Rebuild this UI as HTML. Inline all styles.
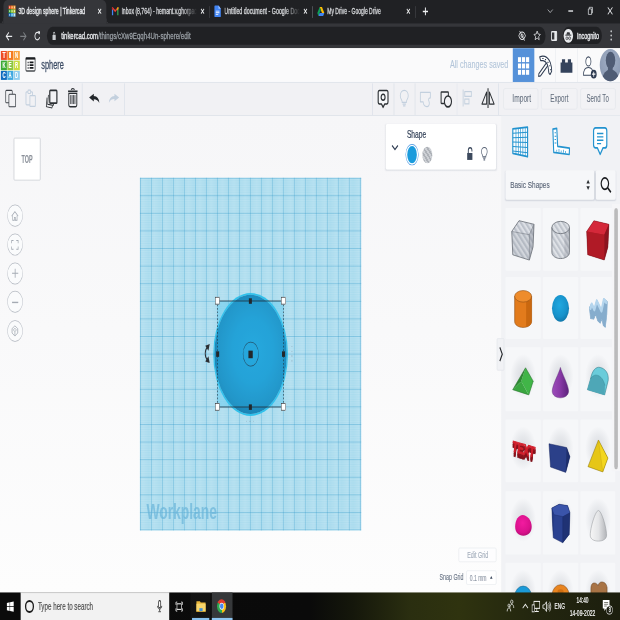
<!DOCTYPE html>
<html lang="en"><head><meta charset="utf-8"><title>3D design sphere | Tinkercad</title>
<style>
html,body{margin:0;padding:0;background:#fff;overflow:hidden}
body{width:620px;height:620px;position:relative}
#d{position:absolute;left:0;top:0;width:1440px;height:900px;transform-origin:0 0;transform:scale(0.430556,0.688889);overflow:hidden;font-family:"Liberation Sans",sans-serif;background:#fbfbfc}
#d div,#d svg,#d span.t{position:absolute;box-sizing:border-box}
#d span.t{white-space:nowrap;transform-origin:0 50%;display:block;-webkit-text-stroke:.2px currentColor}
#d svg{overflow:visible}
</style></head><body><div id="d">
<div style="left:0.0px;top:166.94px;width:1440.0px;height:693.87px;background:linear-gradient(180deg,#f6f6f8 0%,#f9f9fa 45%,#fdfdfd 100%)"></div>
<div style="left:0.0px;top:0.0px;width:1440.0px;height:43.55px;background:#202124"></div>
<div style="left:8.36px;top:0.0px;width:238.53px;height:37.74px;background:#35363a;border-radius:9px 9px 0 0"></div>
<div style="left:0.35999999999999943px;top:25.97px;width:8px;height:8px;background:radial-gradient(circle at 0 0,transparent 7.500px,#35363a 8px)"></div>
<div style="left:246.89px;top:25.97px;width:8px;height:8px;background:radial-gradient(circle at 100% 0,transparent 7.500px,#35363a 8px)"></div>
<div style="left:0.0px;top:33.97px;width:1440.0px;height:35.71px;background:#35363a"></div>
<div style="left:109.16px;top:38.61px;width:1157.81px;height:26.42px;background:#202124;border-radius:14px"></div>
<div style="left:485.65px;top:8.71px;width:1.4px;height:17.42px;background:#55585d"></div>
<div style="left:725.34px;top:8.71px;width:1.4px;height:17.42px;background:#55585d"></div>
<div style="left:964.8px;top:8.71px;width:1.39px;height:17.42px;background:#55585d"></div>
<span class=t style="left:43.2px;top:9.64px;font-size:12px;line-height:14.4px;color:#e8eaed;font-weight:400;transform:scaleX(0.9924);-webkit-text-stroke:0.5px currentColor;">3D design sphere | Tinkercad</span>
<svg style="left:227.38px;top:12.48px;" width="8.83" height="8.71" viewBox="0 0 10 10" preserveAspectRatio="none"><path d="M1 1L9 9M9 1L1 9" stroke="#f1f3f4" stroke-width="2.100" fill="none"/></svg>
<span class=t style="left:282.43px;top:9.64px;font-size:12px;line-height:14.4px;color:#cfd1d4;font-weight:400;transform:scaleX(0.9919);-webkit-mask-image:linear-gradient(90deg,#000 80%,transparent 100%);mask-image:linear-gradient(90deg,#000 80%,transparent 100%);-webkit-text-stroke:0.5px currentColor;">Inbox (8,764) - hemant.v.ghorpac</span>
<svg style="left:466.37px;top:12.48px;" width="8.83" height="8.71" viewBox="0 0 10 10" preserveAspectRatio="none"><path d="M1 1L9 9M9 1L1 9" stroke="#f1f3f4" stroke-width="2.100" fill="none"/></svg>
<span class=t style="left:521.42px;top:9.64px;font-size:12px;line-height:14.4px;color:#cfd1d4;font-weight:400;transform:scaleX(1.0269);-webkit-mask-image:linear-gradient(90deg,#000 80%,transparent 100%);mask-image:linear-gradient(90deg,#000 80%,transparent 100%);-webkit-text-stroke:0.5px currentColor;">Untitled document - Google Doc</span>
<svg style="left:705.37px;top:12.48px;" width="8.82" height="8.71" viewBox="0 0 10 10" preserveAspectRatio="none"><path d="M1 1L9 9M9 1L1 9" stroke="#f1f3f4" stroke-width="2.100" fill="none"/></svg>
<span class=t style="left:760.41px;top:9.64px;font-size:12px;line-height:14.4px;color:#cfd1d4;font-weight:400;transform:scaleX(0.9724);-webkit-text-stroke:0.5px currentColor;">My Drive - Google Drive</span>
<svg style="left:944.36px;top:12.48px;" width="8.83" height="8.71" viewBox="0 0 10 10" preserveAspectRatio="none"><path d="M1 1L9 9M9 1L1 9" stroke="#f1f3f4" stroke-width="2.100" fill="none"/></svg>
<svg style="left:19.51px;top:8.42px;" width="16.03" height="16.26" viewBox="0 0 16 16" preserveAspectRatio="none"><rect x="0.0" y="0.0" width="5.200" height="5.200" fill="#ee4c23"/><rect x="1.7" y="1.3" width="1.800" height="2.600" fill="#fff" opacity=".8"/><rect x="5.4" y="0.0" width="5.200" height="5.200" fill="#f47b20"/><rect x="7.1000000000000005" y="1.3" width="1.800" height="2.600" fill="#fff" opacity=".8"/><rect x="10.8" y="0.0" width="5.200" height="5.200" fill="#f9a13a"/><rect x="12.5" y="1.3" width="1.800" height="2.600" fill="#fff" opacity=".8"/><rect x="0.0" y="5.4" width="5.200" height="5.200" fill="#3aaa35"/><rect x="1.7" y="6.7" width="1.800" height="2.600" fill="#fff" opacity=".8"/><rect x="5.4" y="5.4" width="5.200" height="5.200" fill="#8cc63f"/><rect x="7.1000000000000005" y="6.7" width="1.800" height="2.600" fill="#fff" opacity=".8"/><rect x="10.8" y="5.4" width="5.200" height="5.200" fill="#c9dc3f"/><rect x="12.5" y="6.7" width="1.800" height="2.600" fill="#fff" opacity=".8"/><rect x="0.0" y="10.8" width="5.200" height="5.200" fill="#0f6cbf"/><rect x="1.7" y="12.100000000000001" width="1.800" height="2.600" fill="#fff" opacity=".8"/><rect x="5.4" y="10.8" width="5.200" height="5.200" fill="#3fa9e0"/><rect x="7.1000000000000005" y="12.100000000000001" width="1.800" height="2.600" fill="#fff" opacity=".8"/><rect x="10.8" y="10.8" width="5.200" height="5.200" fill="#8fcdee"/><rect x="12.5" y="12.100000000000001" width="1.800" height="2.600" fill="#fff" opacity=".8"/></svg>
<svg style="left:259.9px;top:10.45px;" width="15.09" height="12.2" viewBox="0 0 16 12" preserveAspectRatio="none"><path d="M0 12V1.5L3 1.2V12z" fill="#4285f4"/><path d="M13 12V1.2l3 .3V12z" fill="#34a853"/><path d="M0 1.5 8 7.5 16 1.5V0.8L14.5 0 8 4.6 1.5 0 0 .8z" fill="#ea4335"/><path d="M13 1.2 16 .2V3l-3 2z" fill="#fbbc04"/><path d="M0 .2 3 1.2V5L0 3z" fill="#c5221f"/></svg>
<svg style="left:498.43px;top:8.13px;" width="14.86" height="16.84" viewBox="0 0 14 18" preserveAspectRatio="none"><path d="M1.5 0H9l5 5v11.5A1.5 1.5 0 0 1 12.5 18h-11A1.5 1.5 0 0 1 0 16.500V1.5A1.5 1.5 0 0 1 1.5 0z" fill="#4285f4"/><path d="M3 8h8v1.3H3zM3 10.600h8v1.300H3zM3 13.200h5.500v1.300H3z" fill="#fff"/><path d="M9 0l5 5H9z" fill="#a1c2fa"/></svg>
<svg style="left:737.19px;top:9.58px;" width="16.26" height="13.65" viewBox="0 0 18 16" preserveAspectRatio="none"><path d="M6 0h6l6 10.400h-6z" fill="#fbbc04"/><path d="M0 10.400 6 0l3 5.200L3 15.600z" fill="#0f9d58"/><path d="M3 15.600l3-5.200h12l-3 5.200z" fill="#4285f4"/></svg>
<svg style="left:981.52px;top:11.03px;" width="12.08" height="11.32" viewBox="0 0 12 12" preserveAspectRatio="none"><path d="M6 0V12M0 6H12" stroke="#f1f3f4" stroke-width="2.200"/></svg>
<svg style="left:1271.15px;top:13.06px;" width="13.93" height="6.1" viewBox="0 0 12 7" preserveAspectRatio="none"><path d="M1 1l5 5 5-5" stroke="#c9ccd0" stroke-width="1.3" fill="none"/></svg>
<div style="left:1319.92px;top:15.39px;width:11.38px;height:1.45px;background:#e8eaed"></div>
<svg style="left:1365.68px;top:9.87px;" width="10.68" height="11.61" viewBox="0 0 11 11" preserveAspectRatio="none"><path d="M.6 2.800h7.600v7.600H.6zM2.800 2.800V.6h7.600v7.600H8.200" stroke="#e8eaed" stroke-width="1.2" fill="none"/></svg>
<svg style="left:1410.74px;top:10.16px;" width="12.07" height="11.32" viewBox="0 0 10 10" preserveAspectRatio="none"><path d="M.5.5l9 9M9.500.5l-9 9" stroke="#e8eaed" stroke-width="1.3" fill="none"/></svg>
<svg style="left:13.01px;top:45.58px;" width="16.25" height="13.36" viewBox="0 0 16 14" preserveAspectRatio="none"><path d="M15 7H2M7.500 1 1.500 7l6 6" stroke="#e8eaed" stroke-width="2" fill="none"/></svg>
<svg style="left:45.52px;top:45.58px;" width="15.8" height="13.36" viewBox="0 0 16 14" preserveAspectRatio="none"><path d="M1 7H14M8.500 1l6 6-6 6" stroke="#7d8084" stroke-width="2" fill="none"/></svg>
<svg style="left:78.5px;top:44.71px;" width="15.33" height="14.81" viewBox="0 0 16 16" preserveAspectRatio="none"><path d="M13.600 9.500A5.800 5.800 0 1 1 12 3.800" stroke="#e8eaed" stroke-width="2" fill="none"/><path d="M9 .5h5.500V6z" fill="#e8eaed"/></svg>
<svg style="left:122.17px;top:45.87px;" width="7.43" height="12.19" viewBox="0 0 10 13" preserveAspectRatio="none"><rect x="0" y="5" width="10" height="8" rx="1" fill="#c9ccd0"/><path d="M2.500 5V3.500a2.500 2.500 0 0 1 5 0V5" stroke="#c9ccd0" stroke-width="1.600" fill="none"/></svg>
<span class=t style="left:142.14px;top:43.42px;font-size:14px;line-height:16.8px;color:#e8eaed;font-weight:400;transform:scaleX(0.9807);-webkit-text-stroke:0.5px currentColor;">tinkercad.com</span>
<span class=t style="left:227.61px;top:43.42px;font-size:14px;line-height:16.8px;color:#9aa0a6;font-weight:400;transform:scaleX(1.0148);-webkit-text-stroke:0.4px currentColor;">/things/cXw9Eqqh4Un-sphere/edit</span>
<svg style="left:1204.49px;top:45.0px;" width="17.19" height="13.94" viewBox="0 0 18 14" preserveAspectRatio="none"><path d="M1 7C3 3 6 1.500 9 1.500S15 3 17 7c-2 4-5 5.500-8 5.500S3 11 1 7z" stroke="#e8eaed" stroke-width="1.500" fill="none"/><circle cx="9" cy="7" r="2.600" stroke="#e8eaed" stroke-width="1.400" fill="none"/><path d="M3 0 15 14" stroke="#e8eaed" stroke-width="1.600"/></svg>
<svg style="left:1239.33px;top:44.42px;" width="17.19" height="14.52" viewBox="0 0 20 19" preserveAspectRatio="none"><path d="M10 1.500l2.600 5.600 6 .7-4.500 4.100 1.300 6L10 14.800 4.600 17.900l1.300-6L1.400 7.800l6-.7z" stroke="#e8eaed" stroke-width="1.700" fill="none" stroke-linejoin="round"/></svg>
<svg style="left:1280.21px;top:44.71px;" width="13.93" height="14.52" viewBox="0 0 14 14" preserveAspectRatio="none"><rect x="1" y="1" width="12" height="12" rx="1" stroke="#e8eaed" stroke-width="2" fill="none"/><rect x="7.500" y="1" width="5.500" height="12" fill="#e8eaed"/></svg>
<div style="left:1306.68px;top:39.48px;width:91.51px;height:24.68px;background:#202124;border-radius:13px"></div>
<div style="left:1309.47px;top:41.52px;width:21.37px;height:20.61px;background:#e8eaed;border-radius:50%"></div>
<svg style="left:1312.26px;top:45.58px;" width="15.79" height="13.36" viewBox="0 0 16 14" preserveAspectRatio="none"><path d="M3.500 4.500 5 .8h6l1.500 3.700z" fill="#35363a"/><rect x="1" y="4.500" width="14" height="1.500" fill="#35363a"/><circle cx="4.800" cy="10" r="2.200" stroke="#35363a" stroke-width="1.300" fill="none"/><circle cx="11.200" cy="10" r="2.200" stroke="#35363a" stroke-width="1.300" fill="none"/><path d="M7 10h2" stroke="#35363a" stroke-width="1.200"/></svg>
<span class=t style="left:1339.66px;top:44.62px;font-size:12px;line-height:14.4px;color:#e8eaed;font-weight:400;transform:scaleX(1.0589);-webkit-text-stroke:0.5px currentColor;">Incognito</span>
<div style="left:1417.7px;top:44.27px;width:3.25px;height:2.62px;background:#e8eaed;border-radius:50%"></div>
<div style="left:1417.7px;top:50.37px;width:3.25px;height:2.61px;background:#e8eaed;border-radius:50%"></div>
<div style="left:1417.7px;top:56.47px;width:3.25px;height:2.61px;background:#e8eaed;border-radius:50%"></div>
<div style="left:0.0px;top:69.68px;width:1440.0px;height:50.51px;background:#fafafb;border-bottom:1.200px solid #cdd4e0"></div>
<div style="left:2.44px;top:73.6px;width:13.93px;height:13.89px;background:#ee4c23"></div>
<span class=t style="left:5.81px;top:73.19px;font-size:12.5px;line-height:15.0px;color:#fff;font-weight:700;transform:scaleX(0.9431);text-align:center">T</span>
<div style="left:17.07px;top:73.6px;width:13.94px;height:13.89px;background:#f47b20"></div>
<span class=t style="left:20.44px;top:73.19px;font-size:12.5px;line-height:15.0px;color:#fff;font-weight:700;transform:scaleX(2.0733);text-align:center">I</span>
<div style="left:31.7px;top:73.6px;width:13.94px;height:13.89px;background:#f9a13a"></div>
<span class=t style="left:35.07px;top:73.19px;font-size:12.5px;line-height:15.0px;color:#fff;font-weight:700;transform:scaleX(0.7976);text-align:center">N</span>
<div style="left:2.44px;top:88.07px;width:13.93px;height:13.89px;background:#3aaa35"></div>
<span class=t style="left:5.81px;top:87.66px;font-size:12.5px;line-height:15.0px;color:#fff;font-weight:700;transform:scaleX(0.7976);text-align:center">K</span>
<div style="left:17.07px;top:88.07px;width:13.94px;height:13.89px;background:#8cc63f"></div>
<span class=t style="left:20.44px;top:87.66px;font-size:12.5px;line-height:15.0px;color:#fff;font-weight:700;transform:scaleX(0.8635);text-align:center">E</span>
<div style="left:31.7px;top:88.07px;width:13.94px;height:13.89px;background:#c9dc3f"></div>
<span class=t style="left:35.07px;top:87.66px;font-size:12.5px;line-height:15.0px;color:#fff;font-weight:700;transform:scaleX(0.7976);text-align:center">R</span>
<div style="left:2.44px;top:102.54px;width:13.93px;height:13.89px;background:#0f6cbf"></div>
<span class=t style="left:5.81px;top:102.13px;font-size:12.5px;line-height:15.0px;color:#fff;font-weight:700;transform:scaleX(0.7976);text-align:center">C</span>
<div style="left:17.07px;top:102.54px;width:13.94px;height:13.89px;background:#3fa9e0"></div>
<span class=t style="left:20.44px;top:102.13px;font-size:12.5px;line-height:15.0px;color:#fff;font-weight:700;transform:scaleX(0.7976);text-align:center">A</span>
<div style="left:31.7px;top:102.54px;width:13.94px;height:13.89px;background:#8fcdee"></div>
<span class=t style="left:35.07px;top:102.13px;font-size:12.5px;line-height:15.0px;color:#fff;font-weight:700;transform:scaleX(0.7976);text-align:center">D</span>
<svg style="left:58.53px;top:83.03px;" width="23.69" height="21.2" viewBox="0 0 24 21" preserveAspectRatio="none"><rect x="1.200" y="1.200" width="21.600" height="18.600" rx="1.600" fill="#fff" stroke="#4a4d52" stroke-width="2"/><path d="M1 2h22" stroke="#1d1f22" stroke-width="3"/><path d="M10 7.500h9M10 11.500h9M10 15.500h9" stroke="#17191c" stroke-width="2.600"/><path d="M5 7.500h3M5 11.500h3M5 15.500h3" stroke="#4a4d52" stroke-width="2.200"/></svg>
<span class=t style="left:95.92px;top:84.43px;font-size:18px;line-height:21.6px;color:#3a4a63;font-weight:400;transform:scaleX(0.9453);-webkit-text-stroke:0.4px currentColor;">sphere</span>
<span class=t style="left:1045.16px;top:84.15px;font-size:17px;line-height:20.4px;color:#b3c5d9;font-weight:400;transform:scaleX(0.9830);">All changes saved</span>
<div style="left:1191.02px;top:69.68px;width:49.7px;height:49.35px;background:#5591d9"></div>
<svg style="left:1203.1px;top:82.74px;" width="26.01" height="25.55" viewBox="0 0 25 25" preserveAspectRatio="none"><rect x="0" y="0" width="7" height="7" fill="#fff"/><rect x="9" y="0" width="7" height="7" fill="#fff"/><rect x="18" y="0" width="7" height="7" fill="#fff"/><rect x="0" y="9" width="7" height="7" fill="#fff"/><rect x="9" y="9" width="7" height="7" fill="#fff"/><rect x="18" y="9" width="7" height="7" fill="#fff"/><rect x="0" y="18" width="7" height="7" fill="#fff"/><rect x="9" y="18" width="7" height="7" fill="#fff"/><rect x="18" y="18" width="7" height="7" fill="#fff"/></svg>
<div style="left:1289.61px;top:69.68px;width:1.16px;height:49.35px;background:#e1e5ea"></div>
<div style="left:1341.17px;top:69.68px;width:1.17px;height:49.35px;background:#e1e5ea"></div>
<svg style="left:1249.55px;top:80.71px;" width="33.44" height="30.19" viewBox="0 0 32 30" preserveAspectRatio="none"><path d="M18.500 10 22 13.500 5 29 1 29.600 1.400 26z" fill="#fff" stroke="#2f3c52" stroke-width="1.900" stroke-linejoin="round"/><path d="M3.400 1.600Q9-.3 14.800 .9 23 3 27 10 30.500 17 30 22L26.600 26.800Q23 26 23 21 22.500 15 19.500 11.500 16 7.500 11 7L5.300 6.800z" fill="#fff" stroke="#2f3c52" stroke-width="2" stroke-linejoin="round"/><path d="M9 3.800h3M15 5.500h2.500M20.500 9.500h2.500M24.500 14.500h2.500M26 20h2.500" stroke="#2f3c52" stroke-width="1.500"/></svg>
<svg style="left:1301.57px;top:85.65px;" width="27.41" height="19.45" viewBox="0 0 26 20" preserveAspectRatio="none"><path d="M0 5h3V0h7v5h6V0h7v5h3v15H0z" fill="#34435c"/></svg>
<svg style="left:1352.67px;top:80.71px;" width="32.52" height="32.81" viewBox="0 0 30 32" preserveAspectRatio="none"><ellipse cx="12.500" cy="8" rx="5.500" ry="6.500" fill="#fff" stroke="#3a475c" stroke-width="1.600"/><path d="M2 27.500c0-7 4-11 10.500-11s10.500 4 10.500 11z" fill="#fff" stroke="#3a475c" stroke-width="1.600" stroke-linejoin="round"/><circle cx="24" cy="26" r="6.200" fill="#2f3c52"/><path d="M20.500 26h7M24 22.500v7" stroke="#fff" stroke-width="1.700"/></svg>
<div style="left:1392.62px;top:70.84px;width:49.700000000000045px;height:47.61px;border-radius:50%;background:radial-gradient(circle at 50% 35%,#a2b0c6,#8392ac);overflow:hidden"><div style="left:29%;top:9%;width:44%;height:52%;border-radius:50%;background:#4f5c74"></div><div style="left:40%;top:50%;width:22%;height:20%;background:#4f5c74"></div><div style="left:12%;top:63%;width:78%;height:60%;border-radius:50% 50% 0 0;background:#4f5c74"></div></div>
<div style="left:0.0px;top:120.19px;width:1440.0px;height:47.91px;background:#f1f1f4;border-bottom:1.200px solid #dadfe7"></div>
<div style="left:190.45px;top:121.06px;width:1.4px;height:46.17px;background:#dfe3ea"></div>
<div style="left:288.46px;top:121.06px;width:1.4px;height:46.17px;background:#dfe3ea"></div>
<div style="left:864.23px;top:121.06px;width:1.4px;height:46.17px;background:#dfe3ea"></div>
<div style="left:914.17px;top:121.06px;width:1.39px;height:46.17px;background:#dfe3ea"></div>
<div style="left:963.41px;top:121.06px;width:1.39px;height:46.17px;background:#dfe3ea"></div>
<div style="left:1060.95px;top:121.06px;width:1.4px;height:46.17px;background:#dfe3ea"></div>
<div style="left:1157.34px;top:121.06px;width:1.4px;height:46.17px;background:#dfe3ea"></div>
<svg style="left:11.61px;top:129.77px;" width="26.02" height="25.84" viewBox="0 0 24 26" preserveAspectRatio="none"><rect x="1.200" y="1.200" width="14" height="18" rx="1.500" fill="#f1f1f4" stroke="#3d4248" stroke-width="1.500"/><rect x="8" y="7" width="14.500" height="18" rx="1.500" fill="#f1f1f4" stroke="#3d4248" stroke-width="1.500"/></svg>
<svg style="left:58.99px;top:130.06px;" width="24.16" height="25.55" viewBox="0 0 22 26" preserveAspectRatio="none"><rect x="1.200" y="3.500" width="14" height="19" rx="1.500" fill="none" stroke="#c3d0de" stroke-width="1.800"/><rect x="5.500" y="0.800" width="5.500" height="5" rx="1" fill="#f1f1f4" stroke="#c3d0de" stroke-width="1.600"/><rect x="9.500" y="9" width="11.500" height="16" rx="1" fill="#f1f1f4" stroke="#c3d0de" stroke-width="1.800"/></svg>
<svg style="left:106.37px;top:130.06px;" width="28.8" height="27.29" viewBox="0 0 27 28" preserveAspectRatio="none"><path d="M3 12 1.500 25.500l12 2L15 24" fill="none" stroke="#2b2f33" stroke-width="1.600"/><path d="M6 8 4.500 22l12 1.500L18 20" fill="none" stroke="#2b2f33" stroke-width="1.600"/><rect x="9" y="1.300" width="15.500" height="19" rx="1.500" fill="#f1f1f4" stroke="#2b2f33" stroke-width="2.600"/></svg>
<svg style="left:156.54px;top:127.45px;" width="24.16" height="29.03" viewBox="0 0 22 29" preserveAspectRatio="none"><path d="M7.500 3.500C8 1 14 1 14.500 3.500" stroke="#2b2f33" stroke-width="1.800" fill="none"/><path d="M1 5.500h20" stroke="#2b2f33" stroke-width="2.400"/><path d="M2.500 8.500h17V25a3 3 0 0 1-3 3h-11a3 3 0 0 1-3-3z" fill="#f1f1f4" stroke="#2b2f33" stroke-width="2"/><path d="M6.500 11v13M9.500 11v13M12.500 11v13M15.500 11v13" stroke="#2b2f33" stroke-width="1.300"/></svg>
<svg style="left:206.71px;top:135.58px;" width="23.69" height="13.36" viewBox="0 0 24 20" preserveAspectRatio="none"><path d="M11 0 0 8.500 11 17V12C17 12 21 14.500 24 20 23.500 11 19 5.500 11 5z" fill="#23272b"/></svg>
<svg style="left:252.7px;top:135.87px;" width="23.69" height="13.07" viewBox="0 0 24 20" preserveAspectRatio="none"><path d="M13 0 24 8.500 13 17V12C7 12 3 14.500 0 20 .5 11 5 5.500 13 5z" fill="#c3d0de"/></svg>
<svg style="left:877.01px;top:130.35px;" width="25.54" height="27.3" viewBox="0 0 24 27" preserveAspectRatio="none"><path d="M4 1.300h16a2.700 2.700 0 0 1 2.700 2.700v14a2.700 2.700 0 0 1-2.700 2.700h-4.500L12 25.500 8.500 20.700H4A2.700 2.700 0 0 1 1.300 18V4A2.700 2.700 0 0 1 4 1.300z" fill="#f7f8fa" stroke="#2b2f33" stroke-width="2.400" stroke-linejoin="round"/><ellipse cx="12" cy="11" rx="4.300" ry="4.300" fill="none" stroke="#2b2f33" stroke-width="2.400"/></svg>
<svg style="left:927.64px;top:130.35px;" width="21.83" height="25.55" viewBox="0 0 20 26" preserveAspectRatio="none"><path d="M10 1.200c5 0 8.500 3.500 8.500 8 0 3-1.500 4.800-3 6.500-.8 1-1 2-1 3.300h-9c0-1.300-.2-2.300-1-3.300-1.500-1.700-3-3.500-3-6.500 0-4.500 3.500-8 8.500-8z" fill="none" stroke="#c3d0de" stroke-width="1.800"/><path d="M6.500 21.500h7M7.500 24h5" stroke="#c3d0de" stroke-width="1.800"/></svg>
<svg style="left:975.48px;top:132.97px;" width="26.95" height="22.93" viewBox="0 0 25 23" preserveAspectRatio="none"><path d="M1.200 1.200h21.600v8c-3.500 0-5 2-3 5 1.500 2.500 1 7-3.500 7.600-5 .5-9-2-9-7H1.200z" fill="none" stroke="#c3d0de" stroke-width="1.800" stroke-linejoin="round"/></svg>
<svg style="left:1022.86px;top:131.81px;" width="27.41" height="24.67" viewBox="0 0 26 25" preserveAspectRatio="none"><rect x="1.400" y="1.400" width="16" height="17" rx="1" fill="none" stroke="#2b2f33" stroke-width="2.200"/><ellipse cx="16.500" cy="15.500" rx="7.800" ry="8" fill="#f1f1f4" stroke="#2b2f33" stroke-width="2.400"/></svg>
<svg style="left:1073.96px;top:130.06px;" width="21.83" height="24.68" viewBox="0 0 20 25" preserveAspectRatio="none"><path d="M1.500 0v25" stroke="#c3d0de" stroke-width="1.800"/><rect x="5" y="3" width="14" height="7" fill="none" stroke="#c3d0de" stroke-width="1.800"/><rect x="5" y="14" width="9" height="7" fill="none" stroke="#c3d0de" stroke-width="1.800"/></svg>
<svg style="left:1117.16px;top:128.32px;" width="32.98" height="28.74" viewBox="0 0 30 28" preserveAspectRatio="none"><path d="M15 0v28" stroke="#2b2f33" stroke-width="2.200"/><path d="M12 5.500V22.500H2z" fill="none" stroke="#2b2f33" stroke-width="1.800" stroke-linejoin="round"/><path d="M18 5.500V22.500H28z" fill="none" stroke="#2b2f33" stroke-width="1.800" stroke-linejoin="round"/></svg>
<div style="left:1169.19px;top:127.74px;width:81.29px;height:31.07px;background:#f2f2f5;border:1px solid #e1e4e9;border-radius:4px"></div>
<span class=t style="left:1189.63px;top:133.83px;font-size:15.5px;line-height:18.6px;color:#5f6a7a;font-weight:400;transform:scaleX(0.9939);-webkit-text-stroke:0.05px currentColor;">Import</span>
<div style="left:1256.52px;top:127.74px;width:84.54px;height:31.07px;background:#f2f2f5;border:1px solid #e1e4e9;border-radius:4px"></div>
<span class=t style="left:1277.88px;top:133.83px;font-size:15.5px;line-height:18.6px;color:#5f6a7a;font-weight:400;transform:scaleX(0.9436);-webkit-text-stroke:0.05px currentColor;">Export</span>
<div style="left:1347.56px;top:127.74px;width:82.22px;height:31.07px;background:#f2f2f5;border:1px solid #e1e4e9;border-radius:4px"></div>
<span class=t style="left:1362.43px;top:133.83px;font-size:15.5px;line-height:18.6px;color:#5f6a7a;font-weight:400;transform:scaleX(0.9191);-webkit-text-stroke:0.05px currentColor;">Send To</span>
<div style="left:31.59px;top:199.74px;width:62.71px;height:62.13px;background:#fff;border:1.500px solid #b9bec6;border-radius:2px"></div>
<span class=t style="left:50.17px;top:222.39px;font-size:15px;line-height:18.0px;color:#8a9099;font-weight:700;transform:scaleX(0.8359);">TOP</span>
<div style="left:17.19px;top:297.29px;width:35.76px;height:31.94px;border:1.300px solid #b5bac2;border-radius:50%;background:#fafbfc"></div>
<div style="left:17.19px;top:338.81px;width:35.76px;height:31.93px;border:1.300px solid #b5bac2;border-radius:50%;background:#fafbfc"></div>
<div style="left:17.19px;top:380.9px;width:35.76px;height:31.94px;border:1.300px solid #b5bac2;border-radius:50%;background:#fafbfc"></div>
<div style="left:17.19px;top:422.42px;width:35.76px;height:31.93px;border:1.300px solid #b5bac2;border-radius:50%;background:#fafbfc"></div>
<div style="left:17.19px;top:464.52px;width:35.76px;height:31.93px;border:1.300px solid #b5bac2;border-radius:50%;background:#fafbfc"></div>
<svg style="left:26.48px;top:305.71px;" width="17.18" height="14.81" viewBox="0 0 17 15" preserveAspectRatio="none"><path d="M1 8 8.500 1.200 16 8" fill="none" stroke="#a4aab3" stroke-width="1.500"/><path d="M3.500 7v7h4v-4h2v4h4V7" fill="none" stroke="#a4aab3" stroke-width="1.500"/></svg>
<svg style="left:26.48px;top:347.52px;" width="17.18" height="14.8" viewBox="0 0 16 15" preserveAspectRatio="none"><path d="M1 5V1h4M11 1h4v4M15 10v4h-4M5 14H1v-4" fill="none" stroke="#a4aab3" stroke-width="1.500"/></svg>
<svg style="left:27.87px;top:390.19px;" width="14.4" height="13.36" viewBox="0 0 14 14" preserveAspectRatio="none"><path d="M7 0v14M0 7h14" stroke="#a4aab3" stroke-width="1.800"/></svg>
<svg style="left:27.87px;top:437.52px;" width="14.4" height="2.03" viewBox="0 0 14 2" preserveAspectRatio="none"><path d="M0 1h14" stroke="#a4aab3" stroke-width="2"/></svg>
<svg style="left:26.48px;top:472.06px;" width="17.18" height="16.84" viewBox="0 0 17 17" preserveAspectRatio="none"><path d="M8.500 1 15 5v6.500l-6.500 4.500L2 11.500V5z" fill="none" stroke="#a4aab3" stroke-width="1.400"/><path d="M8.500 4.500 12 7l-3.500 2.500L5 7z" fill="none" stroke="#a4aab3" stroke-width="1.300"/><path d="M8.500 9.500V15" stroke="#a4aab3" stroke-width="1.300"/></svg>
<div style="left:325.16px;top:257.52px;width:513.52px;height:512.13px;background-color:#b9e2f1;background-image:linear-gradient(90deg,rgba(45,150,200,.27) 0,rgba(45,150,200,.27) 2.4px,transparent 2.4px),linear-gradient(180deg,rgba(45,150,200,.33) 0,rgba(45,150,200,.33) 1.6px,transparent 1.6px),linear-gradient(90deg,rgba(80,175,215,.075) 0,rgba(80,175,215,.075) 1px,transparent 1px),linear-gradient(180deg,rgba(80,175,215,.075) 0,rgba(80,175,215,.075) 1px,transparent 1px);background-size:25.536px 25.547px,25.536px 25.547px,2.5536px 2.5547px,2.5536px 2.5547px;background-position:0.20px -0.20px,0.20px -0.20px,1.40px 0.60px,1.40px 0.60px;box-shadow:inset 0 0 0 1.500px rgba(90,170,215,.18),0 0 3px rgba(120,190,225,.45)"></div>
<span class=t style="left:340.03px;top:723.58px;font-size:32.5px;line-height:39.0px;color:rgba(100,178,216,.66);font-weight:700;transform:scaleX(0.9905);-webkit-text-stroke:0px currentColor;">Workplane</span>
<div style="left:505.16px;top:436.94px;width:153.29px;height:153.87px;background:rgba(120,205,235,.35)"></div>
<div style="left:498.19px;top:427.65px;width:168.15px;height:173.03px;border-radius:50%;background:radial-gradient(circle at 53% 47%,#21a2d9 0%,#1f9ad0 38%,#1c8cbf 64%,#197ba8 84%,#17709a 100%);box-shadow:0 0 0 2.800px #30c2ec"></div>
<div style="left:505.16px;top:436.94px;width:153.29px;height:153.87px;background:rgba(60,195,245,.20)"></div>
<svg style="left:505.16px;top:436.94px;" width="153.29" height="153.87" viewBox="0 0 153.29 153.87" preserveAspectRatio="none"><path d="M0 0H153.29M0 153.87H153.29" stroke="#22313d" stroke-width="1.500" fill="none" opacity=".8"/><path d="M0 0V153.87M153.29 0V153.87" stroke="#22313d" stroke-width="1.600" stroke-dasharray="2.500 2.500" fill="none" opacity=".85"/></svg>
<div style="left:563.69px;top:495.87px;width:37.16px;height:36.58px;border-radius:50%;border:1.400px solid #24506a"></div>
<div style="left:499.91px;top:431.44px;width:10.5px;height:11px;background:#fff;border:1.600px solid #2b2f33;"></div>
<div style="left:653.20px;top:431.44px;width:10.5px;height:11px;background:#fff;border:1.600px solid #2b2f33;"></div>
<div style="left:499.91px;top:585.31px;width:10.5px;height:11px;background:#fff;border:1.600px solid #2b2f33;"></div>
<div style="left:653.20px;top:585.31px;width:10.5px;height:11px;background:#fff;border:1.600px solid #2b2f33;"></div>
<div style="left:578.31px;top:432.94px;width:7px;height:8px;background:#23272b;"></div>
<div style="left:578.31px;top:586.81px;width:7px;height:8px;background:#23272b;"></div>
<div style="left:501.66px;top:510.16px;width:7px;height:8px;background:#23272b;"></div>
<div style="left:654.95px;top:510.16px;width:7px;height:8px;background:#23272b;"></div>
<div style="left:576.56px;top:508.66px;width:10.5px;height:11px;background:#23272b;"></div>
<div style="left:677.26px;top:502.26px;width:1.4px;height:23.22px;background:repeating-linear-gradient(180deg,rgba(120,140,160,.45) 0,rgba(120,140,160,.45) 2px,transparent 2px,transparent 7px)"></div>
<div style="left:571.35px;top:610.55px;width:23.23px;height:1.01px;background:repeating-linear-gradient(90deg,rgba(120,140,160,.45) 0,rgba(120,140,160,.45) 3px,transparent 3px,transparent 8px)"></div>
<svg style="left:470.09px;top:499.35px;" width="17.65" height="28.46" viewBox="0 0 17 28" preserveAspectRatio="none"><path d="M12 4.500C4.500 9 4.500 19 12 23.500" fill="none" stroke="#2b2f33" stroke-width="2"/><path d="M6.500 2.800 16.500 .5 13.500 10z" fill="#2b2f33"/><path d="M6.500 25.200l10 2.300-3-9.500z" fill="#2b2f33"/></svg>
<div style="left:896.05px;top:179.71px;width:255.49px;height:66.19px;background:#fff;border-radius:3px;box-shadow:0 1px 2.500px rgba(60,80,110,.11)"></div>
<span class=t style="left:945.29px;top:185.5px;font-size:16px;line-height:19.2px;color:#36445a;font-weight:400;transform:scaleX(0.9739);-webkit-text-stroke:0.35px currentColor;">Shape</span>
<svg style="left:908.59px;top:209.9px;" width="16.73" height="8.42" viewBox="0 0 16 9" preserveAspectRatio="none"><path d="M1.500 1.200 8 7.500l6.500-6.300" fill="none" stroke="#2f3c52" stroke-width="2.400"/></svg>
<div style="left:942.27px;top:209.03px;width:29.26px;height:30.77px;border-radius:50%;border:1.400px solid #3d8fe0;background:#fff"></div>
<div style="left:945.52px;top:212.23px;width:22.76px;height:24.39px;border-radius:50%;background:#1a9bdc"></div>
<div style="left:980.83px;top:213.1px;width:23.23px;height:23.81px;border-radius:50%;background:repeating-linear-gradient(45deg,#cdd0d5 0,#cdd0d5 3.200px,#aeb2b8 3.200px,#aeb2b8 6.400px)"></div>
<svg style="left:1083.72px;top:212.52px;" width="15.79" height="19.16" viewBox="0 0 15 19" preserveAspectRatio="none"><rect x="1" y="9" width="11.500" height="10" fill="#3d4a5e"/><path d="M3.500 9V5.500a4 4 0 0 1 8 0V7" fill="none" stroke="#3d4a5e" stroke-width="2"/></svg>
<svg style="left:1116.7px;top:212.52px;" width="15.79" height="20.32" viewBox="0 0 15 20" preserveAspectRatio="none"><path d="M7.500 1c3.800 0 6.300 2.700 6.300 6 0 2.300-1.100 3.600-2.200 5-.6.800-.8 1.500-.8 2.500h-6.600c0-1-.2-1.700-.8-2.500C2.300 10.600 1.200 9.300 1.200 7c0-3.300 2.500-6 6.300-6z" fill="none" stroke="#5b6678" stroke-width="1.500"/><path d="M5 16.500h5M5.700 18.800h3.600" stroke="#5b6678" stroke-width="1.500"/></svg>
<div style="left:1064.67px;top:795.19px;width:88.03px;height:21.2px;background:#fdfdfe;border:1px solid #e4e7ec;border-radius:3px"></div>
<span class=t style="left:1085.11px;top:797.84px;font-size:13.5px;line-height:16.2px;color:#a3adbb;font-weight:400;transform:scaleX(0.9287);">Edit Grid</span>
<span class=t style="left:1021.01px;top:829.77px;font-size:13.5px;line-height:16.2px;color:#6a7586;font-weight:400;transform:scaleX(0.9093);">Snap Grid</span>
<div style="left:1083.02px;top:827.71px;width:69.68px;height:21.19px;background:#fff;border:1px solid #e3e6eb;border-radius:3px"></div>
<span class=t style="left:1091.15px;top:830.64px;font-size:13.5px;line-height:16.2px;color:#8d96a4;font-weight:400;transform:scaleX(0.8670);">0.1 mm</span>
<svg style="left:1137.6px;top:835.55px;" width="6.04" height="4.06" viewBox="0 0 6 4" preserveAspectRatio="none"><path d="M0 4 3 0l3 4z" fill="#3d4a5e"/></svg>
<div style="left:1164.31px;top:168.1px;width:275.69px;height:691.84px;background:#f1f2f5"></div>
<div style="left:1154.32px;top:491.08px;width:16.26px;height:46.45px;background:#f1f2f5;border:1px solid #dfe3e8;border-radius:2px"></div>
<svg style="left:1158.97px;top:502.84px;" width="9.75" height="22.35" viewBox="0 0 9 22" preserveAspectRatio="none"><path d="M1.800 1.200 7 11l-5.200 9.800" fill="none" stroke="#24272b" stroke-width="2.300"/></svg>
<svg style="left:1189.16px;top:182.9px;" width="40.41" height="43.55" viewBox="0 0 40 44" preserveAspectRatio="none"><path d="M2 4 36 1.500V45L2 40z" fill="#fff" stroke="#2393cf" stroke-width="2.600" stroke-linejoin="round"/><path d="M9.3 3.25V42.05" stroke="#2393cf" stroke-width="1.500"/><path d="M14.6 3.00V42.60" stroke="#2393cf" stroke-width="1.500"/><path d="M19.9 2.75V43.15" stroke="#2393cf" stroke-width="1.500"/><path d="M25.2 2.50V43.70" stroke="#2393cf" stroke-width="1.500"/><path d="M30.5 2.25V44.25" stroke="#2393cf" stroke-width="1.500"/><path d="M2 10.5L36 9.0" stroke="#2393cf" stroke-width="1.500"/><path d="M2 17.0L36 16.5" stroke="#2393cf" stroke-width="1.500"/><path d="M2 23.5L36 24.0" stroke="#2393cf" stroke-width="1.500"/><path d="M2 30.0L36 31.5" stroke="#2393cf" stroke-width="1.500"/><path d="M2 36.5L36 39.0" stroke="#2393cf" stroke-width="1.500"/></svg>
<svg style="left:1282.06px;top:185.23px;" width="42.74" height="41.22" viewBox="0 0 42 42" preserveAspectRatio="none"><path d="M2 2.500 11 1.500 13 28 40 30.500 39.500 40 4 37z" fill="#fff" stroke="#2393cf" stroke-width="2.500" stroke-linejoin="round"/><path d="M6 8h3M6 13h4M6 18h3M6 23h4M11 33v3M16 32v4.500M21 34v3M26 33v4.500M31 35v3" stroke="#2393cf" stroke-width="1.500"/></svg>
<svg style="left:1377.29px;top:184.35px;" width="33.91" height="42.1" viewBox="0 0 32 43" preserveAspectRatio="none"><path d="M6 1.500h20a4.500 4.500 0 0 1 4.500 4.500v21a4.500 4.500 0 0 1-4.500 4.500h-4L16 41l-6-9.500H6A4.500 4.500 0 0 1 1.500 27V6A4.500 4.500 0 0 1 6 1.500z" fill="#fff" stroke="#2393cf" stroke-width="2.600" stroke-linejoin="round"/><path d="M9 10h14M9 15h14M9 20h14M9 25h9" stroke="#2393cf" stroke-width="2"/></svg>
<div style="left:1173.83px;top:247.06px;width:206.25px;height:43.26px;background:#f6f7f9;border-radius:3px;box-shadow:0 1.500px 2.500px rgba(60,80,110,.16)"></div>
<span class=t style="left:1185.45px;top:259.56px;font-size:14.5px;line-height:17.4px;color:#5a6577;font-weight:400;transform:scaleX(1.0320);">Basic Shapes</span>
<svg style="left:1362.43px;top:261.0px;" width="7.89" height="14.81" viewBox="0 0 8 15" preserveAspectRatio="none"><path d="M0 5.500 4 0l4 5.500zM0 9.500 4 15l4-5.500z" fill="#2b2f33"/></svg>
<div style="left:1384.26px;top:247.06px;width:45.99px;height:43.26px;background:#f6f7f9;border-radius:3px;box-shadow:0 1.500px 2.500px rgba(60,80,110,.16)"></div>
<svg style="left:1394.48px;top:256.06px;" width="26.94" height="24.1" viewBox="0 0 26 24" preserveAspectRatio="none"><circle cx="10.500" cy="10.500" r="8.300" fill="none" stroke="#17191c" stroke-width="2.600"/><path d="M16.500 16.500 24 23" stroke="#17191c" stroke-width="3"/></svg>
<div style="left:1173.6px;top:302.23px;width:82.22px;height:91.16px;background:#f6f7f9;border-radius:2px"></div>
<div style="left:1261.16px;top:302.23px;width:81.76px;height:91.16px;background:#f6f7f9;border-radius:2px"></div>
<div style="left:1348.03px;top:302.23px;width:81.29px;height:91.16px;background:#f6f7f9;border-radius:2px"></div>
<div style="left:1173.6px;top:401.52px;width:82.22px;height:90.87px;background:#f6f7f9;border-radius:2px"></div>
<div style="left:1261.16px;top:401.52px;width:81.76px;height:90.87px;background:#f6f7f9;border-radius:2px"></div>
<div style="left:1348.03px;top:401.52px;width:81.29px;height:90.87px;background:#f6f7f9;border-radius:2px"></div>
<div style="left:1173.6px;top:504.29px;width:82.22px;height:92.32px;background:#f6f7f9;border-radius:2px"></div>
<div style="left:1261.16px;top:504.29px;width:81.76px;height:92.32px;background:#f6f7f9;border-radius:2px"></div>
<div style="left:1348.03px;top:504.29px;width:81.29px;height:92.32px;background:#f6f7f9;border-radius:2px"></div>
<div style="left:1173.6px;top:608.95px;width:82.22px;height:91.31px;background:#f6f7f9;border-radius:2px"></div>
<div style="left:1261.16px;top:608.95px;width:81.76px;height:91.31px;background:#f6f7f9;border-radius:2px"></div>
<div style="left:1348.03px;top:608.95px;width:81.29px;height:91.31px;background:#f6f7f9;border-radius:2px"></div>
<div style="left:1173.6px;top:713.18px;width:82.22px;height:91.59px;background:#f6f7f9;border-radius:2px"></div>
<div style="left:1261.16px;top:713.18px;width:81.76px;height:91.59px;background:#f6f7f9;border-radius:2px"></div>
<div style="left:1348.03px;top:713.18px;width:81.29px;height:91.59px;background:#f6f7f9;border-radius:2px"></div>
<div style="left:1173.6px;top:817.26px;width:82.22px;height:91.45px;background:#f6f7f9;border-radius:2px"></div>
<div style="left:1261.16px;top:817.26px;width:81.76px;height:91.45px;background:#f6f7f9;border-radius:2px"></div>
<div style="left:1348.03px;top:817.26px;width:81.29px;height:91.45px;background:#f6f7f9;border-radius:2px"></div>
<svg style="left:1173.6px;top:302.23px;" width="81.99" height="91.16" viewBox="0 0 82 92" preserveAspectRatio="none"><defs><pattern id="st1" width="8" height="8" patternUnits="userSpaceOnUse" patternTransform="rotate(-45)"><rect width="8" height="8" fill="#dde0e6"/><rect width="4" height="8" fill="#bcc1ca"/></pattern></defs><path d="M14.600 34.300 31.500 18.500 66.300 23.800 64 57 55.500 76.200 17 68.500z" fill="url(#st1)"/><path d="M55.500 39 66.300 23.800 64 57 55.500 76.200z" fill="rgba(110,116,128,.30)"/><path d="M14.600 34.300 55.500 39 55.500 76.200 17 68.500z" fill="rgba(120,126,138,.10)"/><path d="M14.600 34.300 31.500 18.500 66.300 23.800 64 57 55.500 76.200 17 68.500z" fill="none" stroke="#666b73" stroke-width="1.400" stroke-linejoin="round"/><path d="M14.600 34.300 55.500 39 66.300 23.800M55.500 39V76.200" fill="none" stroke="#7c8189" stroke-width="1.100"/></svg>
<svg style="left:1261.16px;top:302.23px;" width="81.99" height="91.16" viewBox="0 0 82 92" preserveAspectRatio="none"><defs><pattern id="st2" width="8" height="8" patternUnits="userSpaceOnUse" patternTransform="rotate(-45)"><rect width="8" height="8" fill="#dfe2e7"/><rect width="4" height="8" fill="#bfc4cc"/></pattern></defs><path d="M20.800 28.500V65c0 5 9 9 20.400 9s20.400-4 20.400-9V28.500z" fill="url(#st2)" stroke="#666b73" stroke-width="1.400"/><path d="M50 36.500V73c7-1.200 11.600-4.300 11.600-8V28.500c0 3.700-4.600 6.800-11.600 8z" fill="rgba(110,116,128,.25)"/><ellipse cx="41.200" cy="28.500" rx="20.400" ry="9" fill="url(#st2)" stroke="#666b73" stroke-width="1.400"/></svg>
<svg style="left:1348.03px;top:302.23px;" width="81.98" height="91.16" viewBox="0 0 82 92" preserveAspectRatio="none"><path d="M14.600 34.300 31.500 18.500 66.300 23.800 64 57 55.500 76.200 17 68.500z" fill="#b31b27"/><path d="M14.600 34.300 31.500 18.500 66.300 23.800 55.500 39z" fill="#d4283a"/><path d="M55.500 39 66.300 23.800 64 57 55.500 76.200z" fill="#8c1420"/><path d="M14.600 34.300 55.500 39 55.500 76.200 17 68.500z" fill="#b01a26"/><path d="M14.600 34.300 31.500 18.500 66.300 23.800 64 57 55.500 76.200 17 68.500z" fill="none" stroke="#6e0f18" stroke-width=".7" stroke-linejoin="round"/></svg>
<svg style="left:1173.6px;top:401.52px;" width="81.99" height="90.87" viewBox="0 0 82 92" preserveAspectRatio="none"><path d="M21.300 28.500V65.500c0 5 8.800 8.800 19.700 8.800s19.700-3.800 19.700-8.800V28.500z" fill="#e27b1c" stroke="#8a4a12" stroke-width="1"/><path d="M48 36.200V73.600c7.500-1 12.700-4 12.700-8.100V28.500c0 3.700-5 6.700-12.700 7.700z" fill="#c96810"/><ellipse cx="41" cy="28.500" rx="19.700" ry="8.500" fill="#ee8c2c" stroke="#8a4a12" stroke-width="1"/></svg>
<svg style="left:1261.16px;top:401.52px;" width="81.99" height="90.87" viewBox="0 0 82 92" preserveAspectRatio="none"><defs><radialGradient id="sp1" cx=".45" cy=".38" r=".72"><stop offset="0" stop-color="#20a8e0"/><stop offset=".6" stop-color="#1792cb"/><stop offset="1" stop-color="#0f6c9c"/></radialGradient></defs><ellipse cx="40.800" cy="46.200" rx="19.800" ry="19.600" fill="url(#sp1)"/></svg>
<svg style="left:1348.03px;top:401.52px;" width="81.98" height="90.87" viewBox="0 0 82 92" preserveAspectRatio="none"><path d="M21 45 26 39 32.500 47 38 34 49 49 54.500 32 62.500 36.500 61.500 55 58 74 53 71 50 62 46 68 40 64 35.500 55 31 62 23.500 61z" fill="#86adcd" stroke="#86adcd" stroke-width="1.500" stroke-linejoin="round"/><path d="M23.500 46 26.200 40 32.500 48 38 35.500 49 50 54.500 33.500 60 37.500" fill="none" stroke="#b4d5ed" stroke-width="5" stroke-linecap="round" stroke-linejoin="round"/></svg>
<svg style="left:1173.6px;top:504.29px;" width="81.99" height="92.32" viewBox="0 0 82 92" preserveAspectRatio="none"><defs><radialGradient id="sh6"><stop offset="0" stop-color="#8f95a0" stop-opacity="0.3"/><stop offset=".55" stop-color="#9aa0ab" stop-opacity="0.165"/><stop offset="1" stop-color="#9aa0ab" stop-opacity="0"/></radialGradient></defs><ellipse cx="41" cy="42" rx="30" ry="32" fill="url(#sh6)"/><path d="M46.700 29.800 64.400 49.100 54.200 69 36.600 49.100z" fill="#41b548"/><path d="M46.700 29.800 36.600 49.100 16.800 61.500z" fill="#2d8a32"/><path d="M16.800 61.500 36.600 49.100 54.200 69z" fill="#3aa640"/><path d="M46.700 29.800 64.400 49.100 54.200 69 16.800 61.500z" fill="none" stroke="#1f6b24" stroke-width=".9" stroke-linejoin="round"/></svg>
<svg style="left:1261.16px;top:504.29px;" width="81.99" height="92.32" viewBox="0 0 82 92" preserveAspectRatio="none"><defs><radialGradient id="sh7"><stop offset="0" stop-color="#8f95a0" stop-opacity="0.3"/><stop offset=".55" stop-color="#9aa0ab" stop-opacity="0.165"/><stop offset="1" stop-color="#9aa0ab" stop-opacity="0"/></radialGradient><linearGradient id="cn1" x1="0" x2="1"><stop offset="0" stop-color="#9c4dba"/><stop offset=".45" stop-color="#8a3aa8"/><stop offset="1" stop-color="#5c227c"/></linearGradient></defs><ellipse cx="41" cy="42" rx="30" ry="32" fill="url(#sh7)"/><path d="M40.600 29.300C42.500 36 59.600 55 59.600 63.500c0 6-8.500 9.700-19 9.700s-19-3.700-19-9.700C21.600 55 38.700 36 40.600 29.300z" fill="url(#cn1)" stroke="#5b2875" stroke-width=".8"/></svg>
<svg style="left:1348.03px;top:504.29px;" width="81.98" height="92.32" viewBox="0 0 82 92" preserveAspectRatio="none"><defs><radialGradient id="sh8"><stop offset="0" stop-color="#8f95a0" stop-opacity="0.3"/><stop offset=".55" stop-color="#9aa0ab" stop-opacity="0.165"/><stop offset="1" stop-color="#9aa0ab" stop-opacity="0"/></radialGradient></defs><ellipse cx="41" cy="42" rx="30" ry="32" fill="url(#sh8)"/><path d="M16.300 61.500 23.500 46C27 34 36 27.500 46 29.300 58 31 66.500 38 64.600 48L56.400 69z" fill="#6accda" stroke="#28707d" stroke-width=".9" stroke-linejoin="round"/><path d="M16.300 61.500 23.500 46c7-9 27-8 33.500 9.500L56.400 69z" fill="#4ea7b7"/><path d="M23.500 46c7-9 27-8 33.500 9.500" fill="none" stroke="#2f7f8d" stroke-width=".8"/></svg>
<svg style="left:1173.6px;top:608.95px;" width="81.99" height="91.31" viewBox="0 0 82 92" preserveAspectRatio="none"><defs><radialGradient id="sh9"><stop offset="0" stop-color="#8f95a0" stop-opacity="0.3"/><stop offset=".55" stop-color="#9aa0ab" stop-opacity="0.165"/><stop offset="1" stop-color="#9aa0ab" stop-opacity="0"/></radialGradient></defs><ellipse cx="41" cy="42" rx="30" ry="32" fill="url(#sh9)"/></svg>
<span class=t style="left:1190.1px;top:643.0px;font-size:22px;line-height:24px;color:#7d0f18;font-weight:700;font-style:italic;letter-spacing:-1.2px;transform:skewY(10deg) scaleX(.98);-webkit-text-stroke:1.200px #7d0f18">TEXT</span>
<span class=t style="left:1190.1px;top:641.0px;font-size:22px;line-height:24px;color:#86111b;font-weight:700;font-style:italic;letter-spacing:-1.2px;transform:skewY(10deg) scaleX(.98);-webkit-text-stroke:1.200px #86111b">TEXT</span>
<span class=t style="left:1190.1px;top:639.0px;font-size:22px;line-height:24px;color:#90131d;font-weight:700;font-style:italic;letter-spacing:-1.2px;transform:skewY(10deg) scaleX(.98);-webkit-text-stroke:1.200px #90131d">TEXT</span>
<span class=t style="left:1190.1px;top:636.0px;font-size:22px;line-height:24px;color:#d3202d;font-weight:700;font-style:italic;letter-spacing:-1.2px;transform:skewY(10deg) scaleX(.98);-webkit-text-stroke:1.200px #d3202d">TEXT</span>
<svg style="left:1261.16px;top:608.95px;" width="81.99" height="91.31" viewBox="0 0 82 92" preserveAspectRatio="none"><defs><radialGradient id="sh10"><stop offset="0" stop-color="#8f95a0" stop-opacity="0.3"/><stop offset=".55" stop-color="#9aa0ab" stop-opacity="0.165"/><stop offset="1" stop-color="#9aa0ab" stop-opacity="0"/></radialGradient></defs><ellipse cx="41" cy="42" rx="30" ry="32" fill="url(#sh10)"/><path d="M14.100 35.400 55.100 41 62.600 54.400 52.900 77.300 17.600 69.500z" fill="#2b4089"/><path d="M55.100 41 62.600 54.400 52.900 77.300z" fill="#1e2f6d"/><path d="M14.100 35.400 55.100 41 62.600 54.400 52.900 77.300 17.600 69.500z" fill="none" stroke="#15225a" stroke-width=".8" stroke-linejoin="round"/></svg>
<svg style="left:1348.03px;top:608.95px;" width="81.98" height="91.31" viewBox="0 0 82 92" preserveAspectRatio="none"><defs><radialGradient id="sh11"><stop offset="0" stop-color="#8f95a0" stop-opacity="0.3"/><stop offset=".55" stop-color="#9aa0ab" stop-opacity="0.165"/><stop offset="1" stop-color="#9aa0ab" stop-opacity="0"/></radialGradient></defs><ellipse cx="41" cy="42" rx="30" ry="32" fill="url(#sh11)"/><path d="M41.900 29.900 63.900 56.400 52 76.700 17.600 68.900z" fill="#e6c617"/><path d="M41.900 29.900 63.900 56.400 52 76.700 49 62z" fill="#f3d61f"/><path d="M41.900 29.900 63.900 56.400 52 76.700 17.600 68.900z" fill="none" stroke="#86700a" stroke-width=".9" stroke-linejoin="round"/><path d="M41.900 29.900 49 62 52 76.700" fill="none" stroke="#c9a50c" stroke-width=".7"/></svg>
<svg style="left:1173.6px;top:713.18px;" width="81.99" height="91.59" viewBox="0 0 82 92" preserveAspectRatio="none"><defs><radialGradient id="sh12"><stop offset="0" stop-color="#8f95a0" stop-opacity="0.3"/><stop offset=".55" stop-color="#9aa0ab" stop-opacity="0.165"/><stop offset="1" stop-color="#9aa0ab" stop-opacity="0"/></radialGradient><radialGradient id="mg1" cx=".45" cy=".38" r=".72"><stop offset="0" stop-color="#f21ba0"/><stop offset=".65" stop-color="#da118c"/><stop offset="1" stop-color="#a50c6a"/></radialGradient></defs><ellipse cx="41" cy="42" rx="30" ry="32" fill="url(#sh12)"/><path d="M22.500 52c0-10 8-17.200 17.500-17.200S60.900 42 60.900 52c0 8-8 13-19.400 13S22.500 60 22.500 52z" fill="url(#mg1)"/></svg>
<svg style="left:1261.16px;top:713.18px;" width="81.99" height="91.59" viewBox="0 0 82 92" preserveAspectRatio="none"><defs><radialGradient id="sh13"><stop offset="0" stop-color="#8f95a0" stop-opacity="0.3"/><stop offset=".55" stop-color="#9aa0ab" stop-opacity="0.165"/><stop offset="1" stop-color="#9aa0ab" stop-opacity="0"/></radialGradient></defs><ellipse cx="41" cy="42" rx="30" ry="32" fill="url(#sh13)"/><path d="M20.700 24.500 37.500 19 57.300 21 62.600 31 61 63 46 75.300 24 68z" fill="#2a4190"/><path d="M20.700 24.500 37.500 19 57.300 21 62.600 31 46 37 26.500 34.500z" fill="#3a54aa"/><path d="M46 37 62.600 31 61 63 46 75.300z" fill="#1f3274"/><path d="M20.700 24.500 26.500 34.500 24 68z" fill="#243a86"/><path d="M26.500 34.500 46 37V75.300" fill="none" stroke="#1b2c68" stroke-width=".7"/><path d="M20.700 24.500 37.500 19 57.300 21 62.600 31 61 63 46 75.300 24 68z" fill="none" stroke="#15245c" stroke-width=".8" stroke-linejoin="round"/></svg>
<svg style="left:1348.03px;top:713.18px;" width="81.98" height="91.59" viewBox="0 0 82 92" preserveAspectRatio="none"><defs><radialGradient id="sh14"><stop offset="0" stop-color="#8f95a0" stop-opacity="0.3"/><stop offset=".55" stop-color="#9aa0ab" stop-opacity="0.165"/><stop offset="1" stop-color="#9aa0ab" stop-opacity="0"/></radialGradient><linearGradient id="pb1" x1="0" x2="1"><stop offset="0" stop-color="#f6f6f6"/><stop offset=".5" stop-color="#e4e5e7"/><stop offset="1" stop-color="#b2b4b8"/></linearGradient></defs><ellipse cx="41" cy="42" rx="30" ry="32" fill="url(#sh14)"/><path d="M41.900 28.200c7 0 19 25 19 36 0 5.500-8 8.600-19 8.600s-19-3.100-19-8.600c0-11 12-36 19-36z" fill="url(#pb1)" stroke="#8f9297" stroke-width=".9"/></svg>
<svg style="left:1173.6px;top:817.26px;" width="81.99" height="91.45" viewBox="0 0 82 92" preserveAspectRatio="none"><defs><radialGradient id="sh15"><stop offset="0" stop-color="#8f95a0" stop-opacity="0.3"/><stop offset=".55" stop-color="#9aa0ab" stop-opacity="0.165"/><stop offset="1" stop-color="#9aa0ab" stop-opacity="0"/></radialGradient></defs><ellipse cx="41" cy="42" rx="30" ry="32" fill="url(#sh15)"/><ellipse cx="41" cy="48" rx="19" ry="14" fill="#1b9ad8" stroke="#0d5f8c" stroke-width="1"/></svg>
<svg style="left:1261.16px;top:817.26px;" width="81.99" height="91.45" viewBox="0 0 82 92" preserveAspectRatio="none"><defs><radialGradient id="sh16"><stop offset="0" stop-color="#8f95a0" stop-opacity="0.3"/><stop offset=".55" stop-color="#9aa0ab" stop-opacity="0.165"/><stop offset="1" stop-color="#9aa0ab" stop-opacity="0"/></radialGradient></defs><ellipse cx="41" cy="42" rx="30" ry="32" fill="url(#sh16)"/><ellipse cx="41" cy="47" rx="19.500" ry="15" fill="#e8841f" stroke="#8a4a12" stroke-width="1"/><ellipse cx="41" cy="42" rx="7" ry="3.500" fill="#d06f12"/></svg>
<svg style="left:1348.03px;top:817.26px;" width="81.98" height="91.45" viewBox="0 0 82 92" preserveAspectRatio="none"><defs><radialGradient id="sh17"><stop offset="0" stop-color="#8f95a0" stop-opacity="0.3"/><stop offset=".55" stop-color="#9aa0ab" stop-opacity="0.165"/><stop offset="1" stop-color="#9aa0ab" stop-opacity="0"/></radialGradient></defs><ellipse cx="41" cy="42" rx="30" ry="32" fill="url(#sh17)"/><path d="M24.500 70V38c0-6 3-8.500 8-8.500 4 0 6.500 1.500 8.500 4 2-4 5-6 10-5.500 6 .5 9.500 3 11 8V70z" fill="#a87345" stroke="#6e4724" stroke-width="1"/></svg>
<div style="left:1421.42px;top:296.13px;width:18.58px;height:387.58px;background:#f5f5f7"></div>
<div style="left:1426.53px;top:301.94px;width:8.82px;height:379.45px;background:linear-gradient(90deg,#ababac,#bebebf 40%,#b6b6b7);border-radius:4px"></div>
<div style="left:0.0px;top:859.79px;width:1440.0px;height:40.5px;background:linear-gradient(90deg,#0b0b0b 0%,#0a0a0a 50%,#15170b 57%,#2a2e10 66%,#2f330f 74%,#23260f 86%,#1c1e0e 100%)"></div>
<div style="left:47.85px;top:859.79px;width:344.67px;height:40.5px;background:#f2f2f2;border-top:1px solid #d9d9d9"></div>
<svg style="left:15.79px;top:872.71px;" width="15.8" height="15.1" viewBox="0 0 16 16" preserveAspectRatio="none"><path d="M0 2.300 6.500 1.400v6.100H0zM7.500 1.250 16 0v7.500H7.500zM0 8.500h6.500v6.100L0 13.700zM7.500 8.500H16V16l-8.500-1.250z" fill="#fff"/></svg>
<div style="left:57.6px;top:870.97px;width:21.83px;height:18.87px;border-radius:50%;border:3px solid #1d1d1d"></div>
<span class=t style="left:88.26px;top:871.26px;font-size:15px;line-height:18.0px;color:#4a4a4a;font-weight:400;transform:scaleX(0.9670);-webkit-text-stroke:0.25px currentColor;">Type here to search</span>
<svg style="left:364.65px;top:870.97px;" width="11.61" height="18.0" viewBox="0 0 11 18" preserveAspectRatio="none"><rect x="3.200" y=".9" width="4.600" height="10.500" rx="2.300" fill="#fafafa" stroke="#2e2e2e" stroke-width="1.600"/><path d="M1 8.500c0 6 9 6 9 0M5.500 13V16.500M2.500 17h6" fill="none" stroke="#2e2e2e" stroke-width="1.400"/></svg>
<svg style="left:407.85px;top:872.71px;" width="16.25" height="15.1" viewBox="0 0 16 15" preserveAspectRatio="none"><rect x="3" y="3.500" width="10" height="8" fill="none" stroke="#fff" stroke-width="1.400"/><path d="M.7 5V1h3M15.300 5V1h-3M.7 10v4h3M15.300 10v4h-3" fill="none" stroke="#fff" stroke-width="1.300"/></svg>
<div style="left:441.75px;top:859.79px;width:47.39px;height:40.5px;background:rgba(255,255,255,.04)"></div>
<svg style="left:455.23px;top:870.68px;" width="23.69" height="18.29" viewBox="0 0 19 17" preserveAspectRatio="none"><path d="M1 1.500h6.500l1.500 2H18V15.500H1z" fill="#e9b63a"/><path d="M1 5h17v10.500H1z" fill="#f8d56b"/><path d="M6.500 11h6v4.500h-6z" fill="#3f8fd8"/><path d="M1 15.500h17" stroke="#d9a325" stroke-width="1"/></svg>
<div style="left:445.7px;top:896.81px;width:40.42px;height:3.48px;background:#86c0ee"></div>
<div style="left:492.39px;top:859.79px;width:47.61px;height:40.5px;background:#36383a"></div>
<div style="left:492.39px;top:896.81px;width:47.61px;height:3.48px;background:#8ec6f2"></div>
<div style="left:504.46px;top:870.1px;width:20.9px;height:19.74px;border-radius:50%;background:conic-gradient(from 60deg,#fbc116 0 120deg,#2da94f 120deg 240deg,#e33b2e 240deg 360deg)"></div>
<div style="left:509.57px;top:875.03px;width:10.68px;height:9.87px;border-radius:50%;background:#4687f4;border:1.500px solid #fff"></div>
<svg style="left:1176.62px;top:870.39px;" width="17.19" height="18.0" viewBox="0 0 17 18" preserveAspectRatio="none"><circle cx="11.500" cy="3.600" r="2.600" fill="none" stroke="#f2f2f2" stroke-width="1.300"/><path d="M7 12.500c0-3.500 2-5.300 4.500-5.300s4.500 1.800 4.500 5.300" fill="none" stroke="#f2f2f2" stroke-width="1.300"/><circle cx="5" cy="9" r="2.200" fill="none" stroke="#f2f2f2" stroke-width="1.300"/><path d="M1 17.500c0-3.300 1.700-5 4-5s4 1.700 4 5" fill="none" stroke="#f2f2f2" stroke-width="1.300"/></svg>
<svg style="left:1213.32px;top:875.9px;" width="14.4" height="7.55" viewBox="0 0 14 8" preserveAspectRatio="none"><path d="M1 7.300 7 1.300l6 6" fill="none" stroke="#f2f2f2" stroke-width="1.600"/></svg>
<svg style="left:1234.68px;top:871.55px;" width="19.51" height="17.13" viewBox="0 0 19 17" preserveAspectRatio="none"><rect x="5" y="1" width="13" height="10" fill="none" stroke="#f2f2f2" stroke-width="1.500"/><path d="M11.500 11v4M7 15.500h9" stroke="#f2f2f2" stroke-width="1.500"/><rect x=".8" y="6" width="5.500" height="10" fill="#1c1e0e" stroke="#f2f2f2" stroke-width="1.300"/></svg>
<svg style="left:1259.77px;top:871.55px;" width="19.51" height="17.13" viewBox="0 0 19 17" preserveAspectRatio="none"><path d="M1 6h3.500L9 1.500v14L4.500 11H1z" fill="none" stroke="#f2f2f2" stroke-width="1.400" stroke-linejoin="round"/><path d="M11.500 5.500c1.500 1.500 1.500 4.500 0 6M13.800 3.500c2.600 2.600 2.600 7.400 0 10M16 1.500c3.600 3.800 3.600 10.200 0 14" fill="none" stroke="#f2f2f2" stroke-width="1.200"/></svg>
<span class=t style="left:1288.1px;top:873.06px;font-size:12px;line-height:14.4px;color:#f2f2f2;font-weight:400;transform:scaleX(0.9291);-webkit-text-stroke:0.3px currentColor;">ENG</span>
<span class=t style="left:1338.74px;top:864.64px;font-size:12px;line-height:14.4px;color:#f2f2f2;font-weight:400;transform:scaleX(0.9281);-webkit-text-stroke:0.3px currentColor;">14:40</span>
<span class=t style="left:1322.94px;top:882.93px;font-size:12px;line-height:14.4px;color:#f2f2f2;font-weight:400;transform:scaleX(0.9687);-webkit-text-stroke:0.3px currentColor;">14-09-2022</span>
<svg style="left:1398.66px;top:870.39px;" width="17.65" height="17.42" viewBox="0 0 17 17" preserveAspectRatio="none"><path d="M1 1h15v12H8.500L4.500 16.500V13H1z" fill="#fff"/><path d="M4 4.500h9M4 7h9M4 9.500h6" stroke="#1c1e0e" stroke-width="1"/></svg>
<div style="left:1408.41px;top:878.81px;width:14.86px;height:13.65px;border-radius:50%;background:#1b1d10;border:1.300px solid #f2f2f2"></div>
<span class=t style="left:1413.52px;top:879.17px;font-size:11px;line-height:13.2px;color:#f2f2f2;font-weight:400;transform:scaleX(0.7602);-webkit-text-stroke:0.5px currentColor;">3</span>
</div></body></html>
